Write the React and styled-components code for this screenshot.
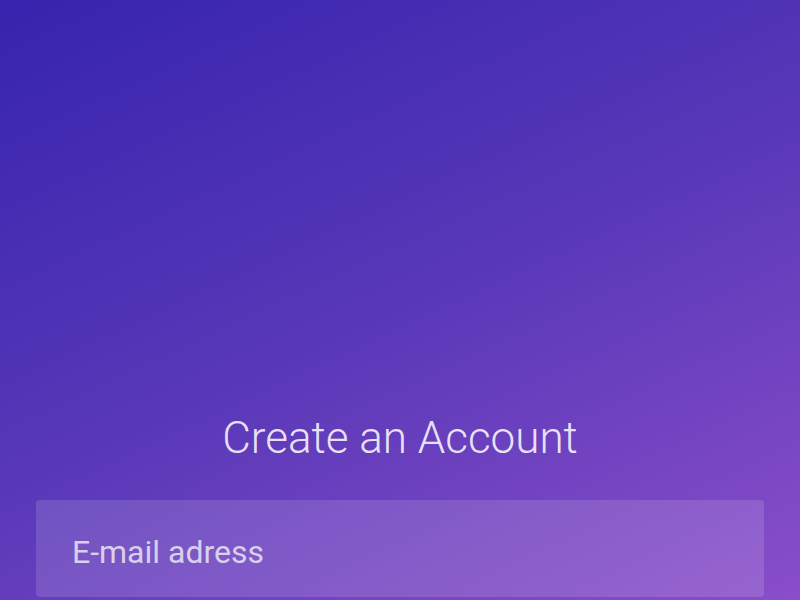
import React from "react";
import styled, { createGlobalStyle } from "styled-components";

const Global = createGlobalStyle`
  html, body { margin: 0; padding: 0; height: 100%; }
  body { font-family: Roboto, "Noto Sans", sans-serif; overflow: hidden; }
  #root { height: 100%; }
`;

const Screen = styled.main`
  box-sizing: border-box;
  height: 600px;
  padding: 414px 36px 0;
  background: linear-gradient(155deg, #3624ae 0%, #5838b8 50%, #8a4ec9 100%);
  display: flex;
  flex-direction: column;
  align-items: stretch;
`;

const Title = styled.h1`
  margin: 0 0 38px;
  text-align: center;
  font-family: Roboto, sans-serif;
  font-weight: 300;
  font-size: 44px;
  line-height: 48px;
  color: rgba(255, 255, 255, 0.86);
`;

const Field = styled.input`
  box-sizing: border-box;
  width: 100%;
  height: 97px;
  flex-shrink: 0;
  border: none;
  outline: none;
  border-radius: 4px;
  padding: 6px 36px 0;
  background: rgba(255, 255, 255, 0.13);
  font-family: Roboto, sans-serif;
  font-size: 32px;
  color: #fff;
  &::placeholder {
    color: rgba(255, 255, 255, 0.72);
  }
`;

export default function App() {
  return (
    <>
      <Global />
      <Screen>
        <Title>Create an Account</Title>
        <Field type="email" placeholder="E-mail adress" />
      </Screen>
    </>
  );
}
